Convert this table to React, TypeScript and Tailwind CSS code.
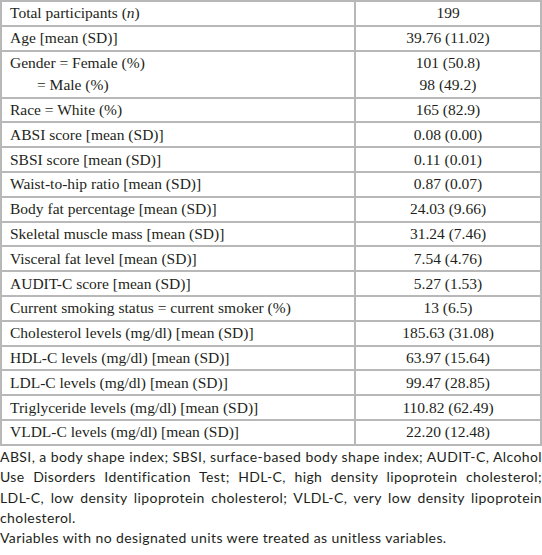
const ROWS: { label: React.ReactNode; value: React.ReactNode }[] = [
  { label: <>Total participants (<i>n</i>)</>, value: "199" },
  { label: "Age [mean (SD)]", value: "39.76 (11.02)" },
  {
    label: (
      <>
        <div>Gender = Female (%)</div>
        <div className="pl-[27px]">= Male (%)</div>
      </>
    ),
    value: (
      <>
        <div>101 (50.8)</div>
        <div>98 (49.2)</div>
      </>
    ),
  },
  { label: "Race = White (%)", value: "165 (82.9)" },
  { label: "ABSI score [mean (SD)]", value: "0.08 (0.00)" },
  { label: "SBSI score [mean (SD)]", value: "0.11 (0.01)" },
  { label: "Waist-to-hip ratio [mean (SD)]", value: "0.87 (0.07)" },
  { label: "Body fat percentage [mean (SD)]", value: "24.03 (9.66)" },
  { label: "Skeletal muscle mass [mean (SD)]", value: "31.24 (7.46)" },
  { label: "Visceral fat level [mean (SD)]", value: "7.54 (4.76)" },
  { label: "AUDIT-C score [mean (SD)]", value: "5.27 (1.53)" },
  { label: "Current smoking status = current smoker (%)", value: "13 (6.5)" },
  { label: "Cholesterol levels (mg/dl) [mean (SD)]", value: "185.63 (31.08)" },
  { label: "HDL-C levels (mg/dl) [mean (SD)]", value: "63.97 (15.64)" },
  { label: "LDL-C levels (mg/dl) [mean (SD)]", value: "99.47 (28.85)" },
  { label: "Triglyceride levels (mg/dl) [mean (SD)]", value: "110.82 (62.49)" },
  { label: "VLDL-C levels (mg/dl) [mean (SD)]", value: "22.20 (12.48)" },
];

// abbreviations must not break at the hyphen
function Abbr({ children }: { children: React.ReactNode }) {
  return <span className="whitespace-nowrap">{children}</span>;
}

export default function App() {
  return (
    <div className="w-[542px] bg-white text-[#231f20]">
      <table
        className="w-full border-collapse text-[15.5px] leading-[22px]"
        style={{ fontFamily: '"Liberation Serif", serif' }}
      >
        <tbody>
          {ROWS.map((row, i) => (
            <tr key={i} className={i === 2 ? "h-[47px]" : "h-[24.8px]"}>
              <td className="w-[354px] border-2 border-[#b8b8b8] pl-2 align-middle">{row.label}</td>
              <td className="border-2 border-[#b8b8b8] text-center align-middle">{row.value}</td>
            </tr>
          ))}
        </tbody>
      </table>
      <div
        className="mt-[1px] text-[14px] leading-[20.4px] tracking-[0.4px] text-[#231f20]"
        style={{ fontFamily: "Lato, sans-serif" }}
      >
        <p className="text-justify">
          ABSI, a body shape index; SBSI, <Abbr>surface-based</Abbr> body shape index; <Abbr>AUDIT-C,</Abbr>{" "}
          Alcohol Use Disorders Identification Test; <Abbr>HDL-C,</Abbr> high density lipoprotein cholesterol;{" "}
          <Abbr>LDL-C,</Abbr> low density lipoprotein cholesterol; <Abbr>VLDL-C,</Abbr> very low density
          lipoprotein cholesterol.
        </p>
        <p>Variables with no designated units were treated as unitless variables.</p>
      </div>
    </div>
  );
}
